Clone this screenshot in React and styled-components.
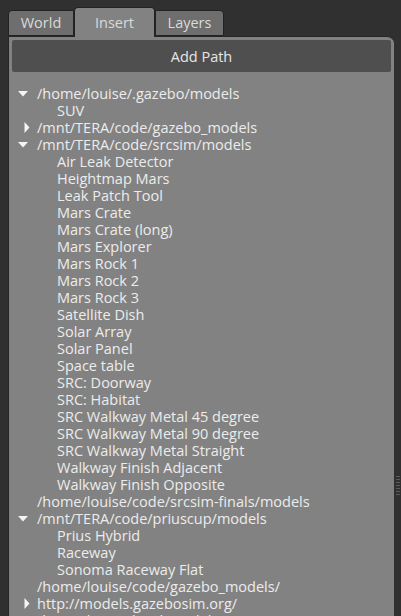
import React from "react";
import styled, { createGlobalStyle } from "styled-components";

const Global = createGlobalStyle`
  html, body { margin: 0; padding: 0; background: #303030; }
  body { width: 401px; height: 616px; overflow: hidden; font-family: "Open Sans", "Noto Sans", sans-serif; }
`;

const Page = styled.div`
  display: flex;
  width: 401px;
  height: 616px;
  background: #303030;
  overflow: hidden;
`;

const Dock = styled.div`
  display: flex;
  flex-direction: column;
  margin-left: 8px;
  width: 386px;
  padding-top: 7px;
`;

const TabBar = styled.div`
  display: flex;
  align-items: flex-end;
  height: 29px;
  position: relative;
  z-index: 1;
`;

const Tab = styled.div`
  box-sizing: border-box;
  height: ${(p) => (p.$active ? "30px" : "26px")};
  width: ${(p) => p.$w}px;
  background: ${(p) => (p.$active ? "#828282" : "#6e6e6e")};
  border: 1px solid #222;
  border-bottom: ${(p) => (p.$active ? "none" : "1px solid #222")};
  border-radius: ${(p) => p.$r};
  color: #dadada;
  font-size: 14.5px;
  line-height: 18px;
  display: flex;
  align-items: center;
  justify-content: center;
  padding-top: ${(p) => (p.$active ? "2px" : "0")};
  padding-bottom: 1px;
  margin-bottom: ${(p) => (p.$active ? "-1px" : "0")};
`;

const Panel = styled.div`
  flex: 1;
  background: #828282;
  border-left: 1px solid #262626;
  border-top: 1px solid #262626;
  border-top-right-radius: 7px;
  padding: 3px 3px 0 3px;
  display: flex;
  flex-direction: column;
`;

const AddButton = styled.div`
  height: 32px;
  background: #4f4f4f;
  border-radius: 2px;
  color: #e6e6e6;
  font-size: 14.5px;
  line-height: 18px;
  display: flex;
  align-items: center;
  justify-content: center;
  padding-top: 1px;
  box-sizing: border-box;
`;

const Tree = styled.div`
  padding-top: 13px;
  display: flex;
  flex-direction: column;
`;

const Row = styled.div`
  height: 17px;
  line-height: 17px;
  display: flex;
  align-items: center;
  padding-left: ${(p) => (p.$child ? 45 : 25)}px;
  position: relative;
  color: #ececec;
  font-size: 14.5px;
  white-space: nowrap;
`;

const Arrow = styled.svg`
  position: absolute;
  left: ${(p) => p.$x}px;
  top: ${(p) => p.$y}px;
`;

const Side = styled.div`
  width: 7px;
  position: relative;
`;

const Grip = styled.div`
  position: absolute;
  left: 2px;
  top: 476px;
  width: 4px;
  height: 20px;
  background: repeating-linear-gradient(#5c5c5c 0 1px, transparent 1px 3px);
`;

const items = [
  ["p", "/home/louise/.gazebo/models", "down"],
  ["c", "SUV"],
  ["p", "/mnt/TERA/code/gazebo_models", "right"],
  ["p", "/mnt/TERA/code/srcsim/models", "down"],
  ["c", "Air Leak Detector"],
  ["c", "Heightmap Mars"],
  ["c", "Leak Patch Tool"],
  ["c", "Mars Crate"],
  ["c", "Mars Crate (long)"],
  ["c", "Mars Explorer"],
  ["c", "Mars Rock 1"],
  ["c", "Mars Rock 2"],
  ["c", "Mars Rock 3"],
  ["c", "Satellite Dish"],
  ["c", "Solar Array"],
  ["c", "Solar Panel"],
  ["c", "Space table"],
  ["c", "SRC: Doorway"],
  ["c", "SRC: Habitat"],
  ["c", "SRC Walkway Metal 45 degree"],
  ["c", "SRC Walkway Metal 90 degree"],
  ["c", "SRC Walkway Metal Straight"],
  ["c", "Walkway Finish Adjacent"],
  ["c", "Walkway Finish Opposite"],
  ["p", "/home/louise/code/srcsim-finals/models"],
  ["p", "/mnt/TERA/code/priuscup/models", "down"],
  ["c", "Prius Hybrid"],
  ["c", "Raceway"],
  ["c", "Sonoma Raceway Flat"],
  ["p", "/home/louise/code/gazebo_models/"],
  ["p", "http://models.gazebosim.org/", "right"],
  ["p", "/home/louise/local/models"],
];

function Expander({ dir }) {
  if (dir === "down")
    return (
      <Arrow $x={6} $y={6} width="10" height="6" viewBox="0 0 10 6">
        <polygon points="0,0 10,0 5,5.5" fill="#f4f4f4" />
      </Arrow>
    );
  return (
    <Arrow $x={12} $y={3} width="6" height="11" viewBox="0 0 6 11">
      <polygon points="0.5,0 5.5,5.5 0.5,11" fill="#f4f4f4" />
    </Arrow>
  );
}

export default function App() {
  return (
    <>
      <Global />
      <Page>
        <Dock>
          <TabBar>
            <Tab $w={66} $r="4px 0 0 0">World</Tab>
            <Tab $w={81} $active $r="4px 4px 0 0">Insert</Tab>
            <Tab $w={69} $r="0 4px 0 0">Layers</Tab>
          </TabBar>
          <Panel>
            <AddButton>Add Path</AddButton>
            <Tree>
              {items.map(([k, t, d], i) => (
                <Row key={i} $child={k === "c"}>
                  {d && <Expander dir={d} />}
                  {t}
                </Row>
              ))}
            </Tree>
          </Panel>
        </Dock>
        <Side>
          <Grip />
        </Side>
      </Page>
    </>
  );
}
